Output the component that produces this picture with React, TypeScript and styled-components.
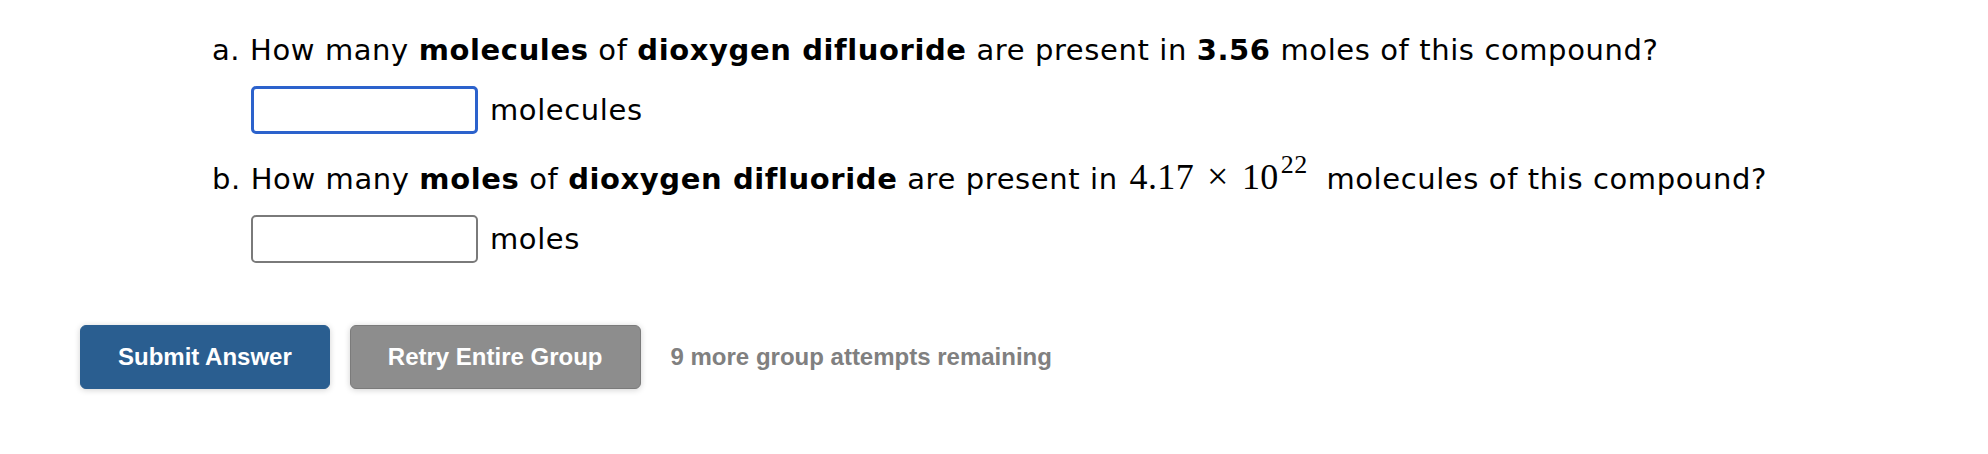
import styled, { createGlobalStyle } from "styled-components";

const GlobalStyle = createGlobalStyle`
  html, body {
    margin: 0;
    padding: 0;
    background: #ffffff;
  }
`;

const Page = styled.div`
  width: 1988px;
  height: 454px;
  box-sizing: border-box;
  padding-top: 32px;
  overflow: hidden;
  font-family: "DejaVu Sans", Verdana, sans-serif;
  color: #000000;
`;

const QuestionList = styled.div`
  display: flex;
  flex-direction: column;
  padding-left: 212px;
`;

const Question = styled.div<{ $gap?: number }>`
  font-size: 29px;
  letter-spacing: 0.6px;
  line-height: 36px;
  height: 36px;
  margin-top: ${(p) => p.$gap ?? 0}px;
  white-space: nowrap;
`;

const Strong = styled.b`
  font-weight: 700;
`;

const Math = styled.span`
  font-family: "Liberation Serif", "Times New Roman", serif;
  font-size: 36px;
  line-height: 0;
  letter-spacing: 0.4px;
  margin: 0 9px 0 2px;
`;

const Times = styled.span`
  margin: 0 13px;
  font-size: 38px;
`;

const Sup = styled.sup`
  font-size: 26px;
  line-height: 0;
  vertical-align: 16px;
  margin-left: 2px;
`;

const AnswerRow = styled.div<{ $gap: number }>`
  display: flex;
  align-items: center;
  gap: 12px;
  margin-top: ${(p) => p.$gap}px;
  padding-left: 39px;
`;

const AnswerInput = styled.div<{ $focused?: boolean }>`
  width: 227px;
  height: 48px;
  box-sizing: border-box;
  border-radius: 5px;
  background: #ffffff;
  border: ${(p) => (p.$focused ? "3px solid #2c62cc" : "2px solid #7a7a7a")};
`;

const Unit = styled.span`
  font-size: 29px;
  letter-spacing: 0.6px;
  line-height: 36px;
`;

const Actions = styled.div`
  display: flex;
  align-items: center;
  margin-top: 62px;
  padding-left: 80px;
  font-family: "Liberation Sans", Arial, Helvetica, sans-serif;
`;

const Button = styled.div<{ $variant: "primary" | "muted" }>`
  height: 64px;
  box-sizing: border-box;
  display: flex;
  align-items: center;
  padding: 0 37px;
  border-radius: 6px;
  font-size: 24px;
  font-weight: 700;
  color: #ffffff;
  background: ${(p) => (p.$variant === "primary" ? "#2a5e90" : "#8d8d8d")};
  border: 1px solid ${(p) => (p.$variant === "primary" ? "#2a5e90" : "#7b7b7b")};
  box-shadow: 0 1px 6px rgba(0, 0, 0, 0.18);
  margin-right: ${(p) => (p.$variant === "primary" ? 20 : 30)}px;
`;

const Attempts = styled.span`
  font-size: 24px;
  font-weight: 700;
  color: #808080;
`;

export default function App() {
  return (
    <Page>
      <GlobalStyle />
      <QuestionList>
        <Question>
          a. How many <Strong>molecules</Strong> of <Strong>dioxygen difluoride</Strong> are
          present in <Strong>3.56</Strong> moles of this compound?
        </Question>
        <AnswerRow $gap={18}>
          <AnswerInput $focused />
          <Unit>molecules</Unit>
        </AnswerRow>
        <Question $gap={27}>
          b. How many <Strong>moles</Strong> of <Strong>dioxygen difluoride</Strong> are
          present in{" "}
          <Math>
            4.17<Times>×</Times>10<Sup>22</Sup>
          </Math>{" "}
          molecules of this compound?
        </Question>
        <AnswerRow $gap={18}>
          <AnswerInput />
          <Unit>moles</Unit>
        </AnswerRow>
      </QuestionList>
      <Actions>
        <Button $variant="primary">Submit Answer</Button>
        <Button $variant="muted">Retry Entire Group</Button>
        <Attempts>9 more group attempts remaining</Attempts>
      </Actions>
    </Page>
  );
}
